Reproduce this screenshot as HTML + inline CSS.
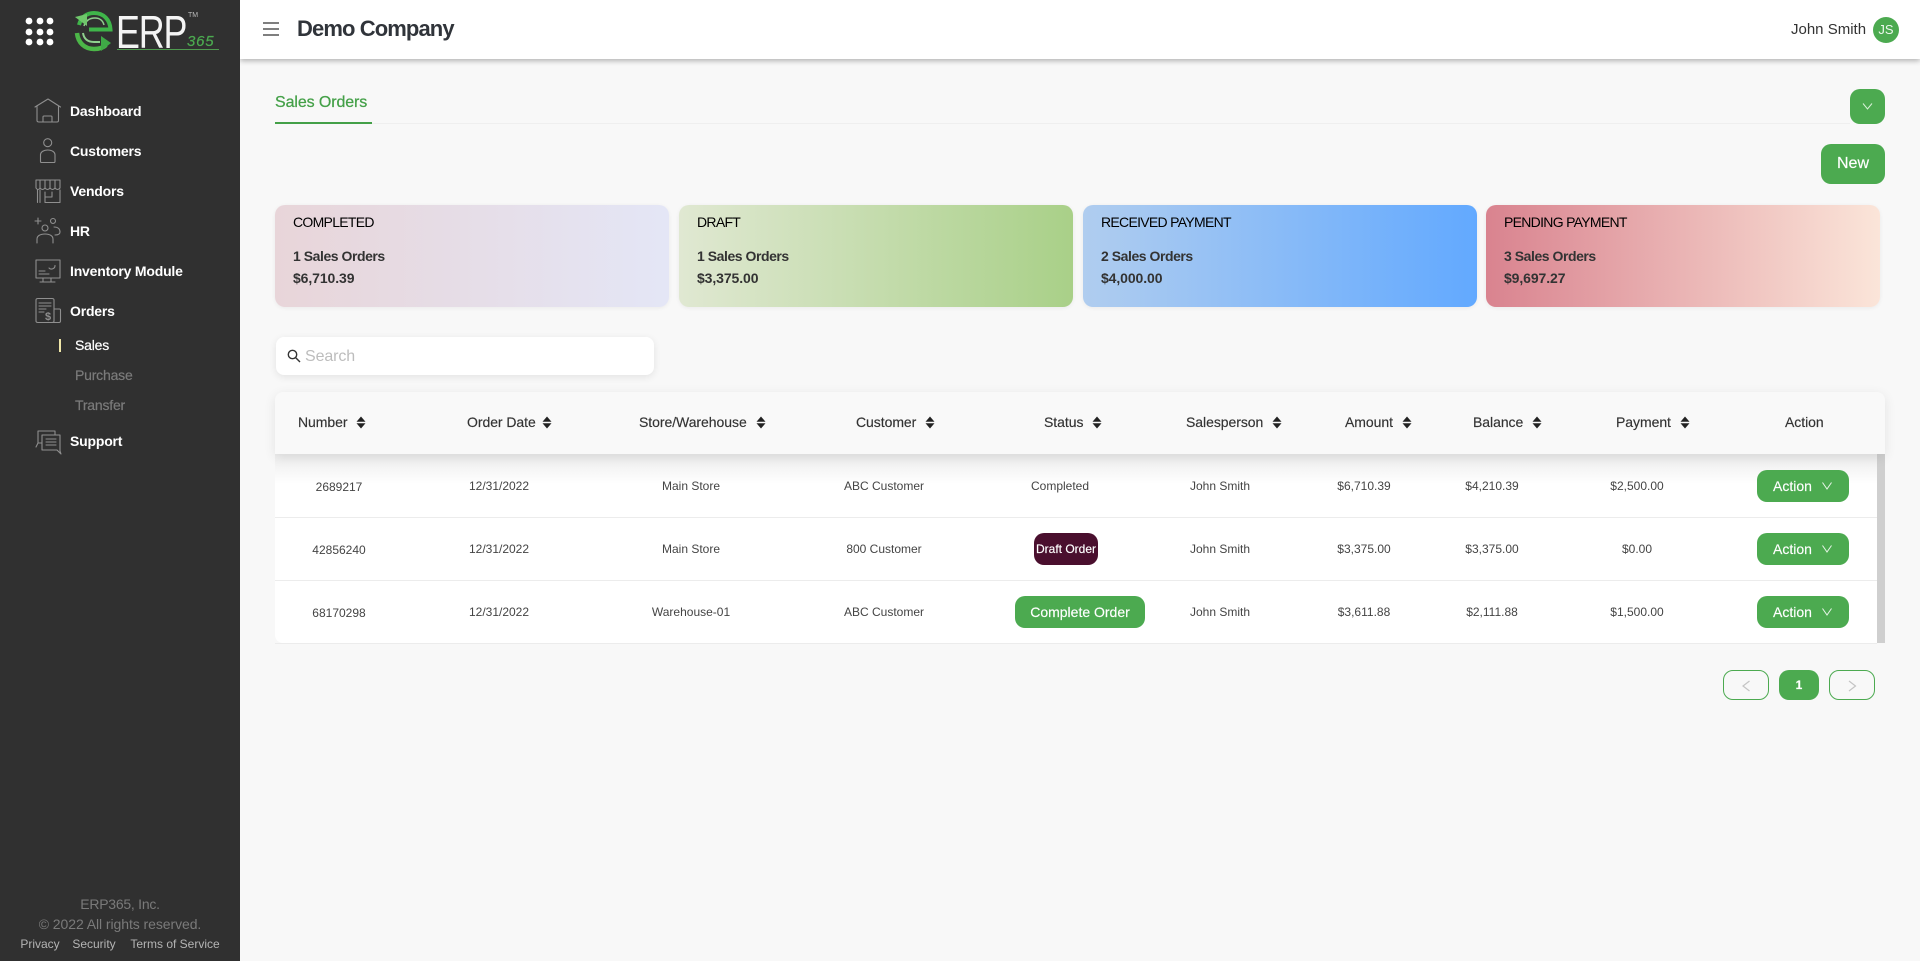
<!DOCTYPE html>
<html><head><meta charset="utf-8"><title>Sales Orders</title>
<style>
html,body{margin:0;padding:0;width:1920px;height:961px;overflow:hidden;background:#f8f8f8;font-family:"Liberation Sans",Arial,sans-serif;color:#333}
.a{position:absolute;white-space:nowrap}
.c{transform:translateX(-50%)}
.mid{transform:translateY(-50%)}
.cc{transform:translate(-50%,-50%)}
#side{position:absolute;left:0;top:0;width:240px;height:961px;background:#303030}
#top{position:absolute;left:240px;top:0;width:1680px;height:59px;background:#fff;box-shadow:0 2px 5px rgba(0,0,0,.28)}
.m{position:absolute;left:70px;margin-top:1px;font-size:14px;font-weight:700;color:#fff;transform:translateY(-50%);letter-spacing:-.2px;white-space:nowrap}
.s{position:absolute;left:75px;font-size:14px;transform:translateY(-50%);color:#7b7b7b;font-weight:400;letter-spacing:-.2px;-webkit-text-stroke:.2px}
svg.i{position:absolute;fill:none;stroke:#8f8f8f;stroke-width:1.100;stroke-linejoin:round;stroke-linecap:round}
.card{position:absolute;top:205px;height:102px;border-radius:10px;box-shadow:0 1px 4px rgba(0,0,0,.06)}
.card b.t{position:absolute;left:18px;top:9px;font-size:14px;font-weight:400;color:#000;white-space:nowrap;letter-spacing:-.7px}
.card b.n{position:absolute;left:18px;top:43px;font-size:14px;color:#333;white-space:nowrap;letter-spacing:-.45px}
.card b.v{position:absolute;left:18px;top:65px;font-size:14px;color:#333;white-space:nowrap;letter-spacing:-.1px}
.h{position:absolute;top:422px;transform:translateY(-50%);font-size:14px;color:#333;white-space:nowrap;letter-spacing:-.05px;-webkit-text-stroke:.15px}
.ar{position:absolute;top:416px;width:10px;height:13px}
.d{position:absolute;font-size:12px;color:#444;white-space:nowrap;transform:translate(-50%,-50%)}
.btn{position:absolute;background:#4caa50;border-radius:10px;color:#fff;text-align:center;-webkit-text-stroke:.15px}
.act{left:1757px;width:92px;height:32px;line-height:32px;font-size:14px;text-align:left;text-indent:16px}
.line{position:absolute;left:275px;width:1602px;height:1px;background:#ececec}
.pg{position:absolute;top:670px;height:28px;width:44px;border:1px solid #4caa50;border-radius:10px;background:transparent}
</style></head><body>

<div id="top"></div>
<div id="side">
<svg class="a" style="left:23px;top:15px" width="34" height="34" fill="#fff"><circle cx="6" cy="6" r="3.4"/><circle cx="17" cy="6" r="3.4"/><circle cx="27" cy="6" r="3.4"/><circle cx="6" cy="17" r="3.4"/><circle cx="17" cy="17" r="3.4"/><circle cx="27" cy="17" r="3.4"/><circle cx="6" cy="27" r="3.4"/><circle cx="17" cy="27" r="3.4"/><circle cx="27" cy="27" r="3.4"/></svg>
<svg class="a" style="left:72px;top:8px" width="48" height="46" fill="none">
<path d="M7 17C9 9 15 5 22 5C32 5 38 12 38.500 21.500H17" stroke="#3fb54a" stroke-width="4"/>
<path d="M12 18C14 12 18 10 23 10C28 10 31 13 32 17" stroke="#8fd08e" stroke-width="1.500"/>
<path d="M5 25C6 35 13 41 22 41C27 41 31 40 34 37" stroke="#4cb648" stroke-width="4.500"/>
<path d="M11 25C12 31 16 34 22 34H28" stroke="#8fd08e" stroke-width="2"/>
<path d="M29 28L39 35L29 43Z" fill="#3fa946"/><path d="M3 9L15 6V18Z" fill="#6fc76b"/>
</svg>
<div class="a" style="left:116px;top:9px;font-size:46px;line-height:46px;color:#f4f4f4;letter-spacing:-1.500px;font-weight:400;transform-origin:left;transform:scaleX(.78)">ERP</div>
<div class="a" style="left:188px;top:12px;font-size:7px;color:#bbb">TM</div>
<div class="a" style="left:187px;top:34px;font-size:15px;line-height:16px;color:#4caa50;font-style:italic;letter-spacing:.8px;-webkit-text-stroke:.2px">365</div>
<div class="a" style="left:117px;top:49px;width:102px;height:1px;background:#4f9a4f"></div>

<svg class="i" style="left:34px;top:97px" width="28" height="28"><path d="M1 10L14 2L26.500 10M3 9V23.500Q3 25 5 25H23Q24.500 25 24.500 23.500V9M9 25V20Q9 19 10 19H17Q18 19 18 20V25"/></svg>
<svg class="i" style="left:38px;top:137px" width="20" height="28"><circle cx="9.700" cy="5.700" r="4"/><path d="M2.500 24.500V18C2.500 15 5.500 13 9.700 13C14 13 17 15 17 18V24.500Q17 25.500 16 25.500H3.500Q2.500 25.500 2.500 24.500Z"/></svg>
<svg class="i" style="left:34px;top:177px" width="28" height="27"><path d="M2 3H26V11Q23.500 14 21 11Q18.500 14 16 11Q13.500 14 11 11Q8.500 14 6 11Q4 14 2 11ZM6 3V11M11 3V11M16 3V11M21 3V11M3.500 13V25.500M6 13V25.500M11 15V25.500H26V13M11 20H18V15"/></svg>
<svg class="i" style="left:34px;top:217px" width="28" height="27"><path d="M1 4H7M4 1V7M19 1.500A2.500 2.500 0 1 0 19 6.500A2.500 2.500 0 1 0 19 1.500ZM11 8A3 3 0 1 0 11 14A3 3 0 1 0 11 8ZM3 26V22C3 19 6 17 11 17C16 17 19 19 19 22V26M20 10C24 10 26 12 26 15C26 17 24 18 21 18"/></svg>
<svg class="i" style="left:34px;top:258px" width="28" height="26"><path d="M2 2H26V20H2ZM9 20V24M17 20V24M6 24H21M5 13H11M5 16H15M21 7.500A3.500 3.500 0 0 1 15 10"/></svg>
<svg class="i" style="left:34px;top:297px" width="28" height="27"><path d="M2 24V3C2 2 3 1.500 4 1.500H18C19 1.500 20 2 20 3V24C20 25 19 25.500 18 25.500H4C3 25.500 2 25 2 24ZM5 6H17M5 9H17M5 12H12M5 15H10M20 12H25.500C26 12 26.500 12.500 26.500 13V24C26.500 25 26 25.500 25 25.500H18"/><text x="11" y="23" font-size="11" font-weight="700" fill="#8f8f8f" stroke="none" font-family="Liberation Sans">$</text></svg>
<svg class="i" style="left:34px;top:429px" width="28" height="26"><path d="M2 18L4 14V2H21V6M8 6H26V22L27 25L23 21H8ZM12 10H22M12 13H22M12 16H22M4 14H8"/></svg>

<div class="m" style="top:110px">Dashboard</div>
<div class="m" style="top:150px">Customers</div>
<div class="m" style="top:190px">Vendors</div>
<div class="m" style="top:230px">HR</div>
<div class="m" style="top:270px">Inventory Module</div>
<div class="m" style="top:310px">Orders</div>
<div class="a" style="left:59px;top:339px;width:2px;height:13px;background:#efe6a8"></div>
<div class="s" style="top:345px;color:#fff">Sales</div>
<div class="s" style="top:375px">Purchase</div>
<div class="s" style="top:405px">Transfer</div>
<div class="m" style="top:440px">Support</div>

<div class="a cc" style="left:120px;top:904px;font-size:14px;color:#7a7a7a;letter-spacing:-.25px">ERP365, Inc.</div>
<div class="a cc" style="left:120px;top:924px;font-size:14px;color:#7a7a7a;letter-spacing:-.07px">© 2022 All rights reserved.</div>
<div class="a cc" style="left:40px;top:944px;font-size:12px;color:#b4b4b4">Privacy</div>
<div class="a cc" style="left:94px;top:944px;font-size:12px;color:#b4b4b4">Security</div>
<div class="a cc" style="left:175px;top:944px;font-size:12px;color:#b4b4b4">Terms of Service</div>
</div>

<svg class="a" style="left:263px;top:22px" width="16" height="14" stroke="#333" stroke-width="1.300"><path d="M0 1H16M0 7H16M0 13H16"/></svg>
<div class="a" style="left:297px;top:16px;font-size:22px;line-height:26px;font-weight:700;color:#30343a;letter-spacing:-.9px">Demo Company</div>
<div class="a" style="left:1791px;top:21px;font-size:15px;line-height:18px;color:#333">John Smith</div>
<div class="a" style="left:1873px;top:17px;width:26px;height:26px;border-radius:50%;background:#4caa50;color:#eef8ee;font-size:13px;line-height:26px;text-align:center">JS</div>

<div class="a" style="left:275px;top:94px;font-size:16px;line-height:18px;color:#44a048;letter-spacing:-.1px;-webkit-text-stroke:.25px">Sales Orders</div>
<div class="a" style="left:372px;top:123px;width:1478px;height:1px;background:#efefef"></div>
<div class="a" style="left:275px;top:122px;width:97px;height:2px;background:#44a048"></div>
<div class="btn" style="left:1850px;top:89px;width:35px;height:35px"><svg width="35" height="35" fill="none" stroke="#d8f0d8" stroke-width="1"><path d="M13 14.500L17.500 20L22 14.500"/></svg></div>
<div class="btn" style="left:1821px;top:144px;width:64px;height:40px;line-height:40px;font-size:16px;font-weight:400">New</div>

<div class="card" style="left:275px;width:394px;background:linear-gradient(90deg,#e8d5d9,#e4e6f6)"><b class="t">COMPLETED</b><b class="n">1 Sales Orders</b><b class="v">$6,710.39</b></div>
<div class="card" style="left:679px;width:394px;background:linear-gradient(90deg,#e0e8d2,#a9d088)"><b class="t">DRAFT</b><b class="n">1 Sales Orders</b><b class="v">$3,375.00</b></div>
<div class="card" style="left:1083px;width:394px;background:linear-gradient(90deg,#b0cdef,#62a9ff)"><b class="t">RECEIVED PAYMENT</b><b class="n">2 Sales Orders</b><b class="v">$4,000.00</b></div>
<div class="card" style="left:1486px;width:394px;background:linear-gradient(90deg,#d9838f,#fbe5d9)"><b class="t">PENDING PAYMENT</b><b class="n">3 Sales Orders</b><b class="v">$9,697.27</b></div>

<div class="a" style="left:276px;top:337px;width:378px;height:38px;background:#fff;border-radius:8px;box-shadow:0 2px 8px rgba(0,0,0,.09)"></div>
<svg class="a" style="left:287px;top:349px" width="14" height="14" fill="none" stroke="#333" stroke-width="1.400"><circle cx="5.500" cy="5.500" r="4.200"/><path d="M8.500 8.500L13 13"/></svg>
<div class="a" style="left:305px;top:348px;font-size:16px;line-height:18px;color:#bdbdbd;letter-spacing:-.1px">Search</div>

<div class="a" style="left:275px;top:454px;width:1610px;height:189px;background:#fff;border-radius:0 0 8px 8px"></div>
<div class="a" style="left:275px;top:454px;width:1602px;height:30px;background:linear-gradient(#ececec,rgba(255,255,255,0))"></div>
<div class="line" style="top:517px"></div>
<div class="line" style="top:580px"></div>
<div class="line" style="top:643px"></div>
<div class="a" style="left:1877px;top:454px;width:8px;height:189px;background:#cfcfcf"></div>
<div class="a" style="left:275px;top:392px;width:1610px;height:62px;background:#f9f9f9;border-radius:8px 8px 0 0;box-shadow:0 3px 12px rgba(0,0,0,.09)"></div>

<div class="h" style="left:298px">Number</div>
<div class="h" style="left:467px">Order Date</div>
<div class="h" style="left:639px">Store/Warehouse</div>
<div class="h" style="left:856px">Customer</div>
<div class="h" style="left:1044px">Status</div>
<div class="h" style="left:1186px">Salesperson</div>
<div class="h" style="left:1345px">Amount</div>
<div class="h" style="left:1473px">Balance</div>
<div class="h" style="left:1616px">Payment</div>
<div class="h" style="left:1785px">Action</div>

<svg class="ar" style="left:356px"><path d="M.5 5.800L5 .5L9.500 5.800ZM.5 7.200L5 12.500L9.500 7.200Z" fill="#222"/></svg>
<svg class="ar" style="left:542px"><path d="M.5 5.800L5 .5L9.500 5.800ZM.5 7.200L5 12.500L9.500 7.200Z" fill="#222"/></svg>
<svg class="ar" style="left:756px"><path d="M.5 5.800L5 .5L9.500 5.800ZM.5 7.200L5 12.500L9.500 7.200Z" fill="#222"/></svg>
<svg class="ar" style="left:925px"><path d="M.5 5.800L5 .5L9.500 5.800ZM.5 7.200L5 12.500L9.500 7.200Z" fill="#222"/></svg>
<svg class="ar" style="left:1092px"><path d="M.5 5.800L5 .5L9.500 5.800ZM.5 7.200L5 12.500L9.500 7.200Z" fill="#222"/></svg>
<svg class="ar" style="left:1272px"><path d="M.5 5.800L5 .5L9.500 5.800ZM.5 7.200L5 12.500L9.500 7.200Z" fill="#222"/></svg>
<svg class="ar" style="left:1402px"><path d="M.5 5.800L5 .5L9.500 5.800ZM.5 7.200L5 12.500L9.500 7.200Z" fill="#222"/></svg>
<svg class="ar" style="left:1532px"><path d="M.5 5.800L5 .5L9.500 5.800ZM.5 7.200L5 12.500L9.500 7.200Z" fill="#222"/></svg>
<svg class="ar" style="left:1680px"><path d="M.5 5.800L5 .5L9.500 5.800ZM.5 7.200L5 12.500L9.500 7.200Z" fill="#222"/></svg>

<div class="d" style="left:339px;top:487px">2689217</div>
<div class="d" style="left:499px;top:486px">12/31/2022</div>
<div class="d" style="left:691px;top:486px">Main Store</div>
<div class="d" style="left:884px;top:486px">ABC Customer</div>
<div class="d" style="left:1060px;top:486px">Completed</div>
<div class="d" style="left:1220px;top:486px">John Smith</div>
<div class="d" style="left:1364px;top:486px">$6,710.39</div>
<div class="d" style="left:1492px;top:486px">$4,210.39</div>
<div class="d" style="left:1637px;top:486px">$2,500.00</div>

<div class="d" style="left:339px;top:550px">42856240</div>
<div class="d" style="left:499px;top:549px">12/31/2022</div>
<div class="d" style="left:691px;top:549px">Main Store</div>
<div class="d" style="left:884px;top:549px">800 Customer</div>
<div class="a" style="left:1034px;top:533px;width:64px;height:32px;line-height:32px;background:#4a0f2e;color:#fff;border-radius:10px;font-size:12px;text-align:center;-webkit-text-stroke:.15px">Draft Order</div>
<div class="d" style="left:1220px;top:549px">John Smith</div>
<div class="d" style="left:1364px;top:549px">$3,375.00</div>
<div class="d" style="left:1492px;top:549px">$3,375.00</div>
<div class="d" style="left:1637px;top:549px">$0.00</div>

<div class="d" style="left:339px;top:613px">68170298</div>
<div class="d" style="left:499px;top:612px">12/31/2022</div>
<div class="d" style="left:691px;top:612px">Warehouse-01</div>
<div class="d" style="left:884px;top:612px">ABC Customer</div>
<div class="btn" style="left:1015px;top:596px;width:130px;height:32px;line-height:32px;font-size:14px">Complete Order</div>
<div class="d" style="left:1220px;top:612px">John Smith</div>
<div class="d" style="left:1364px;top:612px">$3,611.88</div>
<div class="d" style="left:1492px;top:612px">$2,111.88</div>
<div class="d" style="left:1637px;top:612px">$1,500.00</div>

<div class="btn act" style="top:470px">Action<svg class="a" style="left:64px;top:12px" width="12" height="8" fill="none" stroke="#e8f5e8" stroke-width="1"><path d="M1.500 .5L6 7L10.500 .5"/></svg></div>
<div class="btn act" style="top:533px">Action<svg class="a" style="left:64px;top:12px" width="12" height="8" fill="none" stroke="#e8f5e8" stroke-width="1"><path d="M1.500 .5L6 7L10.500 .5"/></svg></div>
<div class="btn act" style="top:596px">Action<svg class="a" style="left:64px;top:12px" width="12" height="8" fill="none" stroke="#e8f5e8" stroke-width="1"><path d="M1.500 .5L6 7L10.500 .5"/></svg></div>

<div class="pg" style="left:1723px"><svg width="44" height="28" fill="none" stroke="#c4c4c4" stroke-width="1.200"><path d="M25.500 10L19 15L25.500 20"/></svg></div>
<div class="btn" style="left:1779px;top:670px;width:40px;height:30px;line-height:30px;font-size:12px;font-weight:700">1</div>
<div class="pg" style="left:1829px"><svg width="44" height="28" fill="none" stroke="#c4c4c4" stroke-width="1.200"><path d="M19 10L25.500 15L19 20"/></svg></div>

</body></html>
